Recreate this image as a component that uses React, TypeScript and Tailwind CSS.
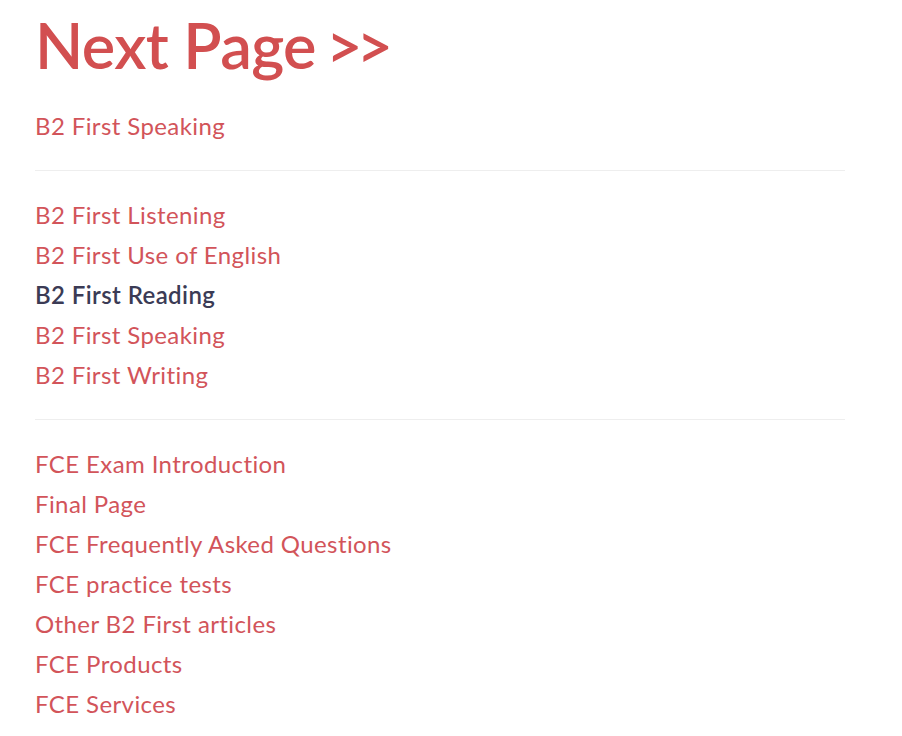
import React from "react";

const sec1 = ["B2 First Speaking"];
const sec2 = [
  { t: "B2 First Listening" },
  { t: "B2 First Use of English" },
  { t: "B2 First Reading", active: true },
  { t: "B2 First Speaking" },
  { t: "B2 First Writing" },
];
const sec3 = [
  "FCE Exam Introduction",
  "Final Page",
  "FCE Frequently Asked Questions",
  "FCE practice tests",
  "Other B2 First articles",
  "FCE Products",
  "FCE Services",
];

const link = "text-[24px] leading-[40px] tracking-[0.4px] text-[#d2545a]";

export default function App() {
  return (
    <div
      className="min-h-[736px] w-[902px] bg-white pl-[35px] pr-[57px] pt-[8px]"
      style={{ fontFamily: "Lato, 'Open Sans', sans-serif" }}
    >
      <h1 className="text-[63px] font-semibold leading-[74px] tracking-[-0.6px] text-[#d24f50]">
        Next Page<span className="ml-[10px] tracking-[-6px]">&gt;&gt;</span>
      </h1>
      <div className="mt-[24px] flex flex-col">
        {sec1.map((t) => (
          <a key={t} className={link}>{t}</a>
        ))}
      </div>
      <div className="my-[24px] h-px bg-[#eeeeee]" />
      <div className="flex flex-col">
        {sec2.map((s) => (
          <a
            key={s.t}
            className={
              s.active
                ? "text-[24px] font-semibold leading-[40px] tracking-[0.4px] text-[#3b3b55]"
                : link
            }
          >
            {s.t}
          </a>
        ))}
      </div>
      <div className="my-[24px] h-px bg-[#eeeeee]" />
      <div className="flex flex-col">
        {sec3.map((t) => (
          <a key={t} className={link}>{t}</a>
        ))}
      </div>
    </div>
  );
}
